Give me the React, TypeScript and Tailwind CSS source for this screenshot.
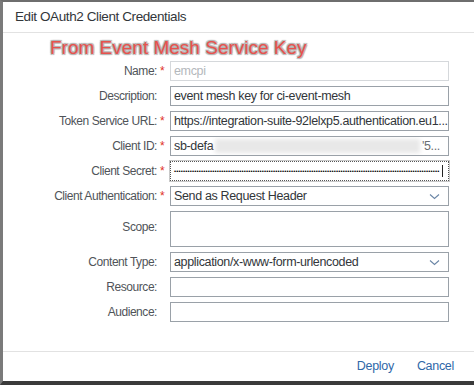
import { ReactNode } from 'react';

const font = { fontFamily: '"Liberation Sans", Arial, sans-serif' };

function Row({ label, required, children, tall }: { label: string; required?: boolean; children: ReactNode; tall?: boolean }) {
  return (
    <div className={`flex ${tall ? 'h-[36px] items-start pt-[7px]' : 'h-[20px] items-center'}`}>
      <div className="w-[154px] text-right text-[12px] tracking-[-0.45px] text-[#505459]">{label}</div>
      <div className="w-[13px] pl-[3px] text-[12px] text-[#e0301e] leading-none">{required ? '*' : ''}</div>
      <div className={`w-[279px] ${tall ? '-mt-[7px]' : ''}`}>{children}</div>
    </div>
  );
}

function Box({ children, className = '' }: { children?: ReactNode; className?: string }) {
  return (
    <div className={`flex h-[20px] items-center border border-[#9aa1a8] bg-white px-[3px] text-[12.5px] tracking-[-0.35px] text-[#32363a] overflow-hidden whitespace-nowrap ${className}`}>
      {children}
    </div>
  );
}

function Chevron() {
  return (
    <svg width="11" height="7" viewBox="0 0 11 7" className="ml-auto mr-[5px] shrink-0">
      <polyline points="1,1.5 5.5,5.5 10,1.5" fill="none" stroke="#6b86a6" strokeWidth="1.1" />
    </svg>
  );
}

export default function App() {
  return (
    <div style={font} className="w-[474px] h-[385px] flex flex-col bg-white border-t-2 border-t-[#6e6e6e] border-l-[3px] border-l-[#7a7a7a] border-b-4 border-b-[#3a3a3a] overflow-hidden">
      {/* Header */}
      <div className="h-[31px] flex items-center pl-[12px] border-b border-[#e2e2e2] text-[13.5px] tracking-[-0.4px] text-[#32363a] shrink-0">
        Edit OAuth2 Client Credentials
      </div>

      {/* Annotation */}
      <div
        className="h-[28px] pl-[47px] pt-[5px] text-[19px] leading-none text-[#e8524d]"
        style={{
          textShadow: '0 0 1px #aaa, 1px 1px 1px #b5b5b5, -1px -1px 1px #b5b5b5, 1px -1px 1px #b5b5b5, -1px 1px 1px #b5b5b5',
        }}
      >
        From Event Mesh Service Key
      </div>

      {/* Form */}
      <div className="flex flex-col gap-[5px]">
        <Row label="Name:" required>
          <Box className="border-[#d5d8db] text-[#b4b8bc]">emcpi</Box>
        </Row>
        <Row label="Description:">
          <Box>event mesh key for ci-event-mesh</Box>
        </Row>
        <Row label="Token Service URL:" required>
          <Box>https://integration-suite-92lelxp5.authentication.eu1...</Box>
        </Row>
        <Row label="Client ID:" required>
          <Box>
            <span>sb-defa</span>
            <span className="mx-[2px] h-[14px] flex-1 bg-[#e8e8e8] blur-[2px]" />
            <span className="text-[#6a6e72]">'5...</span>
            <span className="w-[5px]" />
          </Box>
        </Row>
        <Row label="Client Secret:" required>
          <Box className="border-dotted border-[#555] outline outline-1 outline-[#c8c8c8]">
            <span className="text-[6px] tracking-[0.15px] text-black leading-none">{'•'.repeat(118)}</span>
            <span className="ml-auto h-[12px] w-[1px] shrink-0 bg-[#222] mr-[2px]" />
          </Box>
        </Row>
        <Row label="Client Authentication:" required>
          <Box>
            Send as Request Header
            <Chevron />
          </Box>
        </Row>
        <Row label="Scope:" tall>
          <div className="h-[36px] border border-[#9aa1a8] bg-white" />
        </Row>
        <Row label="Content Type:">
          <Box>
            application/x-www-form-urlencoded
            <Chevron />
          </Box>
        </Row>
        <Row label="Resource:">
          <Box />
        </Row>
        <Row label="Audience:">
          <Box />
        </Row>
      </div>

      <div className="flex-1" />

      {/* Footer */}
      <div className="h-[30px] border-t border-[#e2e2e2] flex items-center justify-end gap-[23px] pr-[20px] text-[12.5px] tracking-[-0.3px] text-[#2f68a8] shrink-0">
        <span>Deploy</span>
        <span>Cancel</span>
      </div>
    </div>
  );
}
